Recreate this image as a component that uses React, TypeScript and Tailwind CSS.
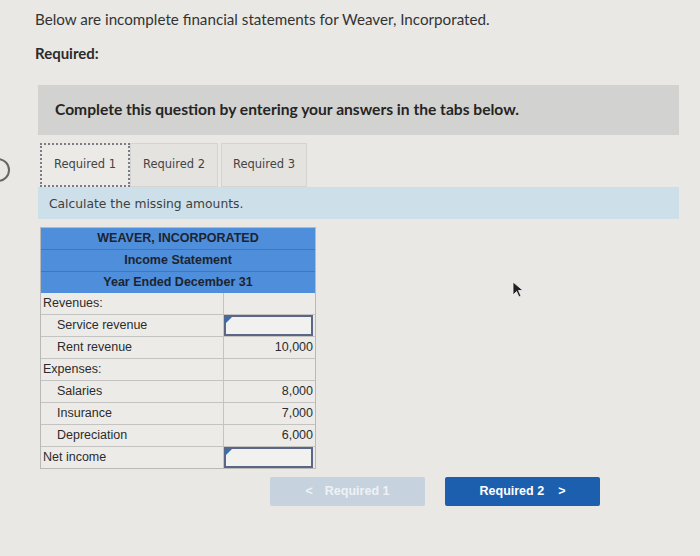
import React from "react";

type Row = {
  label: string;
  indent?: boolean;
  value?: string;
  input?: boolean;
};

const rows: Row[] = [
  { label: "Revenues:" },
  { label: "Service revenue", indent: true, input: true },
  { label: "Rent revenue", indent: true, value: "10,000" },
  { label: "Expenses:" },
  { label: "Salaries", indent: true, value: "8,000" },
  { label: "Insurance", indent: true, value: "7,000" },
  { label: "Depreciation", indent: true, value: "6,000" },
  { label: "Net income", input: true },
];

function InputCell() {
  return (
    <div className="relative h-full w-full border-2 border-[#5d6584] bg-[#f1f1ef]">
      <span className="absolute left-0 top-0 h-0 w-0 border-t-[6px] border-r-[6px] border-t-[#2f6fc0] border-r-transparent" />
    </div>
  );
}

function StatementTable() {
  return (
    <div className="w-[276px] border border-[#b9bab8] font-['Liberation_Sans',Arial,sans-serif] text-[12.5px] text-[#2c2c2c]">
      <div className="bg-[#4f8edb] font-bold text-[#1c2430]">
        <div className="flex h-[22px] items-center justify-center border-b border-[#3f76bd]">
          WEAVER, INCORPORATED
        </div>
        <div className="flex h-[22px] items-center justify-center border-b border-[#3f76bd]">
          Income Statement
        </div>
        <div className="flex h-[21px] items-center justify-center">
          Year Ended December 31
        </div>
      </div>
      {rows.map((r, i) => (
        <div
          key={r.label}
          className={
            "flex bg-[#ecebe8] " +
            (i < rows.length - 1 ? "h-[22px] border-b border-[#c3c4c1]" : "h-[21px]")
          }
        >
          <div
            className={
              "flex w-[183px] items-center border-r border-[#c3c4c1] " +
              (r.indent ? "pl-[16px]" : "pl-[2px]")
            }
          >
            {r.label}
          </div>
          <div className="flex flex-1 items-center justify-end pr-[2px]">
            {r.input ? <InputCell /> : r.value}
          </div>
        </div>
      ))}
    </div>
  );
}

export default function App() {
  return (
    <div className="relative h-[556px] w-[700px] overflow-hidden bg-[#e9e8e5] pl-[35px] pt-[10px]">
      {/* partly visible question marker on the left edge */}
      <div className="absolute left-[-14px] top-[158px] h-[24px] w-[24px] rounded-full border-2 border-[#666]" />

      <p className="font-['Lato',sans-serif] text-[15.2px] leading-[18px] text-[#333]">
        Below are incomplete financial statements for Weaver, Incorporated.
      </p>
      <p className="mt-[16px] font-['Lato',sans-serif] text-[15px] font-bold leading-[18px] text-[#2b2b2b]">
        Required:
      </p>

      <div className="mt-[23px] ml-[3px] flex h-[50px] w-[641px] items-center bg-[#d2d2d0] pl-[17px]">
        <span className="font-['Lato',sans-serif] text-[15.6px] font-bold text-[#252525]">
          Complete this question by entering your answers in the tabs below.
        </span>
      </div>

      <div className="ml-[5px] mt-[8px] flex h-[44px] font-['DejaVu_Sans',Verdana,sans-serif] text-[11.5px] text-[#444]">
        <div className="flex w-[90px] items-center justify-center border-2 border-dotted border-[#7a7d85] bg-[#ebeae7]">
          Required 1
        </div>
        <div className="flex w-[88px] items-center justify-center border border-[#d4d4d2] bg-[#e4e3e0]">
          Required 2
        </div>
        <div className="ml-[3px] flex w-[86px] items-center justify-center border border-[#d4d4d2] bg-[#e4e3e0]">
          Required 3
        </div>
      </div>

      <div className="ml-[3px] flex h-[32px] w-[641px] items-center bg-[#cde0ea] pl-[11px] pt-[3px] font-['DejaVu_Sans',Verdana,sans-serif] text-[12.3px] text-[#404040]">
        Calculate the missing amounts.
      </div>

      <div className="ml-[5px] mt-[8px]">
        <StatementTable />
      </div>

      <div className="ml-[235px] mt-[8px] flex gap-[20px] font-['Liberation_Sans',Arial,sans-serif] text-[12.5px] font-bold">
        <div className="flex h-[29px] w-[155px] items-center justify-center gap-[12px] rounded-[2px] bg-[#c6d2dd] text-[#eef2f6]">
          <span>&lt;</span>
          <span>Required 1</span>
        </div>
        <div className="flex h-[29px] w-[155px] items-center justify-center gap-[14px] rounded-[2px] bg-[#1c5fae] text-white">
          <span>Required 2</span>
          <span>&gt;</span>
        </div>
      </div>

      {/* mouse pointer */}
      <svg className="absolute left-[512px] top-[281px]" width="14" height="18" viewBox="0 0 14 18">
        <path d="M1 1 L1 14 L4.5 10.5 L7 16 L9 15 L6.5 9.5 L11 9.5 Z" fill="#222" stroke="#f2f2f2" strokeWidth="0.8" />
      </svg>
    </div>
  );
}
